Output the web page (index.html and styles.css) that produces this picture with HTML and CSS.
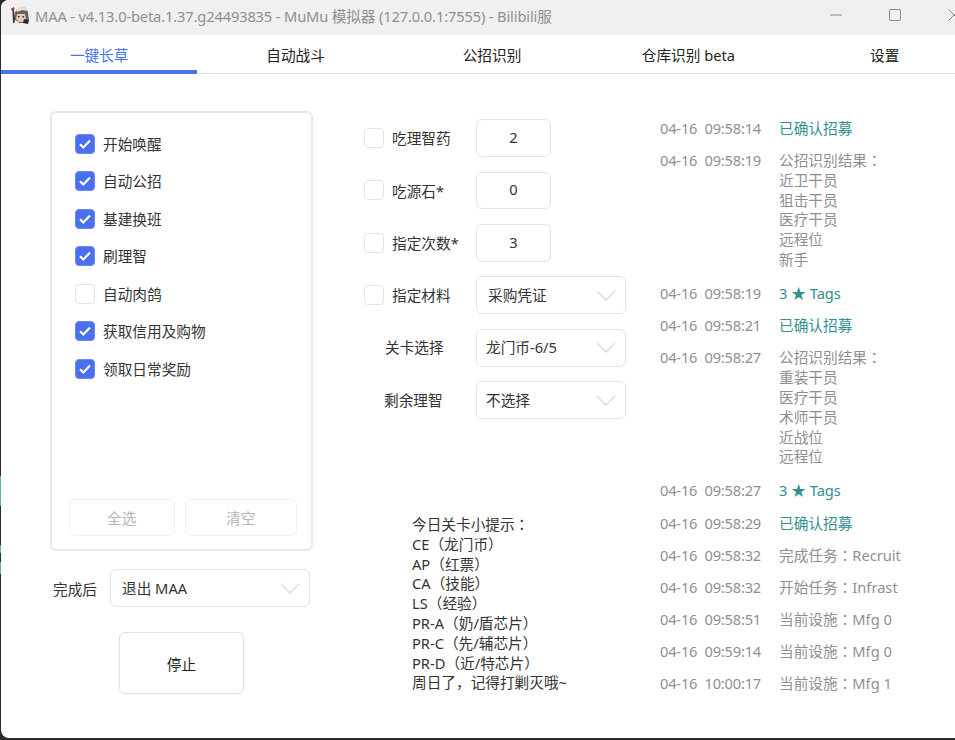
FILE: index.html
```html
<!DOCTYPE html>
<html lang="zh-CN">
<head>
<meta charset="utf-8">
<title>MAA</title>
<link rel="stylesheet" href="styles.css">
</head>
<body>
<div class="edge"><span class="teal t1"></span><span class="teal t2"></span><span class="teal t3"></span></div>
<div class="window">
  <header class="titlebar">
    <svg class="logo" width="20" height="20" viewBox="0 0 20 20">
      <path d="M5 8c1-4 4-6 7-6s6 2 6 6l1 7-3 3H6l-3-2z" fill="#6d6259"/>
      <path d="M6 4l4-3 6 2 2 3-6-1-5 2z" fill="#e8e4dc"/>
      <path d="M7 9h8l1 5-3 3H9l-3-3z" fill="#e3cbb8"/>
      <path d="M1 4l3-2 0 3 1 13H3L2.500 6z" fill="#3c2c25"/>
      <path d="M1.500 3l3 0-1 3z" fill="#c2372d"/>
      <path d="M8 11h1.500v1.500H8zM12.500 11H14v1.500h-1.500z" fill="#35291f"/>
      <path d="M14 14l5 1-1 4-5-1z" fill="#2f2723"/>
      <path d="M5 15l4 2-1 2H4z" fill="#f3efe8"/>
    </svg>
    <span class="title">MAA - v4.13.0-beta.1.37.g24493835 - MuMu 模拟器 (127.0.0.1:7555) - Bilibili服</span>
    <div class="controls">
      <svg class="ctl-min" width="13" height="2" viewBox="0 0 13 2"><path d="M0 1h12" stroke="#8a8a8a" stroke-width="1"/></svg>
      <svg class="ctl-max" width="12" height="12" viewBox="0 0 12 12"><rect x=".5" y=".5" width="11" height="11" rx="1.500" fill="none" stroke="#8a8a8a"/></svg>
      <svg class="ctl-close" width="9" height="12" viewBox="0 0 9 12"><path d="M.5.500l11 11M.5 11.500l11-11" stroke="#8a8a8a" fill="none"/></svg>
    </div>
  </header>
  <nav class="tabs">
    <div class="tab active">一键长草</div>
    <div class="tab">自动战斗</div>
    <div class="tab">公招识别</div>
    <div class="tab">仓库识别 beta</div>
    <div class="tab">设置</div>
  </nav>
  <main class="content">
    <section class="left">
      <div class="panel">
        <div class="checks">
          <label class="check"><span class="box on"><svg width="14" height="12" viewBox="0 0 14 12"><path d="M2 6.200l3.300 3.300L12 2.500" fill="none" stroke="#fff" stroke-width="2.200"/></svg></span>开始唤醒</label>
          <label class="check"><span class="box on"><svg width="14" height="12" viewBox="0 0 14 12"><path d="M2 6.200l3.300 3.300L12 2.500" fill="none" stroke="#fff" stroke-width="2.200"/></svg></span>自动公招</label>
          <label class="check"><span class="box on"><svg width="14" height="12" viewBox="0 0 14 12"><path d="M2 6.200l3.300 3.300L12 2.500" fill="none" stroke="#fff" stroke-width="2.200"/></svg></span>基建换班</label>
          <label class="check"><span class="box on"><svg width="14" height="12" viewBox="0 0 14 12"><path d="M2 6.200l3.300 3.300L12 2.500" fill="none" stroke="#fff" stroke-width="2.200"/></svg></span>刷理智</label>
          <label class="check"><span class="box"></span>自动肉鸽</label>
          <label class="check"><span class="box on"><svg width="14" height="12" viewBox="0 0 14 12"><path d="M2 6.200l3.300 3.300L12 2.500" fill="none" stroke="#fff" stroke-width="2.200"/></svg></span>获取信用及购物</label>
          <label class="check"><span class="box on"><svg width="14" height="12" viewBox="0 0 14 12"><path d="M2 6.200l3.300 3.300L12 2.500" fill="none" stroke="#fff" stroke-width="2.200"/></svg></span>领取日常奖励</label>
        </div>
        <div class="panel-btns">
          <button class="btn-dis b-all">全选</button>
          <button class="btn-dis b-clear">清空</button>
        </div>
      </div>
      <div class="after">
        <span>完成后</span>
        <div class="select sel-after">退出 MAA<svg class="chev" width="20" height="12" viewBox="0 0 20 12"><path d="M1 1l9 9 9-9" fill="none" stroke="#d9d9d9" stroke-width="1.300"/></svg></div>
      </div>
      <button class="stop">停止</button>
    </section>
    <section class="middle">
      <div class="form">
        <div class="row"><span class="box"></span><span class="lbl">吃理智药</span><div class="num">2</div></div>
        <div class="row"><span class="box"></span><span class="lbl">吃源石*</span><div class="num">0</div></div>
        <div class="row"><span class="box"></span><span class="lbl">指定次数*</span><div class="num">3</div></div>
        <div class="row"><span class="box"></span><span class="lbl up">指定材料</span><div class="select sel-a">采购凭证<svg class="chev" width="20" height="12" viewBox="0 0 20 12"><path d="M1 1l9 9 9-9" fill="none" stroke="#d9d9d9" stroke-width="1.300"/></svg></div></div>
        <div class="row"><span class="lbl2 up">关卡选择</span><div class="select">龙门币-6/5<svg class="chev" width="20" height="12" viewBox="0 0 20 12"><path d="M1 1l9 9 9-9" fill="none" stroke="#d9d9d9" stroke-width="1.300"/></svg></div></div>
        <div class="row"><span class="lbl2 l3 up">剩余理智</span><div class="select">不选择<svg class="chev" width="20" height="12" viewBox="0 0 20 12"><path d="M1 1l9 9 9-9" fill="none" stroke="#d9d9d9" stroke-width="1.300"/></svg></div></div>
      </div>
      <div class="tips">今日关卡小提示<span class="colon" lang="zh-TW">：</span><br>CE（龙门币）<br>AP（红票）<br>CA（技能）<br>LS（经验）<br>PR-A（奶/盾芯片）<br>PR-C（先/辅芯片）<br>PR-D（近/特芯片）<br>周日了，记得打剿灭哦~</div>
    </section>
    <section class="log">
      <div class="entry"><span class="time">04-16&nbsp;&nbsp;09:58:14</span><span class="msg teal-text">已确认招募</span></div>
      <div class="entry multi"><span class="time">04-16&nbsp;&nbsp;09:58:19</span><span class="msg">公招识别结果<span class="colon" lang="zh-TW">：</span><br>近卫干员<br>狙击干员<br>医疗干员<br>远程位<br>新手</span></div>
      <div class="entry"><span class="time">04-16&nbsp;&nbsp;09:58:19</span><span class="msg teal-text">3 ★ Tags</span></div>
      <div class="entry"><span class="time">04-16&nbsp;&nbsp;09:58:21</span><span class="msg teal-text">已确认招募</span></div>
      <div class="entry multi"><span class="time">04-16&nbsp;&nbsp;09:58:27</span><span class="msg">公招识别结果<span class="colon" lang="zh-TW">：</span><br>重装干员<br>医疗干员<br>术师干员<br>近战位<br>远程位</span></div>
      <div class="entry"><span class="time">04-16&nbsp;&nbsp;09:58:27</span><span class="msg teal-text">3 ★ Tags</span></div>
      <div class="entry"><span class="time">04-16&nbsp;&nbsp;09:58:29</span><span class="msg teal-text">已确认招募</span></div>
      <div class="entry"><span class="time">04-16&nbsp;&nbsp;09:58:32</span><span class="msg">完成任务<span class="colon" lang="zh-TW">：</span>Recruit</span></div>
      <div class="entry"><span class="time">04-16&nbsp;&nbsp;09:58:32</span><span class="msg">开始任务<span class="colon" lang="zh-TW">：</span>Infrast</span></div>
      <div class="entry"><span class="time">04-16&nbsp;&nbsp;09:58:51</span><span class="msg">当前设施<span class="colon" lang="zh-TW">：</span>Mfg 0</span></div>
      <div class="entry"><span class="time">04-16&nbsp;&nbsp;09:59:14</span><span class="msg">当前设施<span class="colon" lang="zh-TW">：</span>Mfg 0</span></div>
      <div class="entry"><span class="time">04-16&nbsp;&nbsp;10:00:17</span><span class="msg">当前设施<span class="colon" lang="zh-TW">：</span>Mfg 1</span></div>
    </section>
  </main>
</div>
</body>
</html>
```

FILE: styles.css
```css
* { box-sizing: border-box; }
html, body { margin: 0; height: 100%; }
body {
  width: 955px;
  height: 740px;
  overflow: hidden;
  background: #2b2b2b;
  font-family: "Noto Sans", "Noto Sans CJK SC", sans-serif;
  font-size: 14.67px;
  color: #333;
  display: flex;
}
.edge { width: 1px; height: 738px; flex: none; position: relative; }
.teal { position: absolute; left: 0; width: 1px; background: #57b5b0; }
.t1 { top: 476px; height: 30px; }
.t2 { top: 545px; height: 8px; }
.t3 { top: 562px; height: 12px; }
.window {
  width: 954px;
  height: 738px;
  background: #fff;
  border-radius: 8px 0 0 8px;
  overflow: hidden;
  display: flex;
  flex-direction: column;
}
.titlebar {
  height: 35px;
  flex: none;
  background: #f0f0f0;
  display: flex;
  align-items: center;
  padding: 0 0 5px 9px;
}
.logo { flex: none; margin-right: 5px; }
.title { color: #8f8f8f; white-space: nowrap; flex: 1; letter-spacing: -0.14px; }
.controls { display: flex; align-items: center; width: 125px; flex: none; }
.ctl-min { flex: none; }
.ctl-max { flex: none; margin-left: 46px; }
.ctl-close { flex: none; margin-left: 47px; overflow: hidden; }
.tabs {
  height: 39px;
  flex: none;
  display: flex;
  border-bottom: 1px solid #e0e0e0;
}
.tab {
  width: 196.4px;
  flex: none;
  text-align: center;
  line-height: 40px;
  color: #222;
  height: 39px;
  white-space: nowrap;
}
.active { color: #4a72f0; border-bottom: 4px solid #4a72f0; }
.content { flex: 1; display: flex; min-height: 0; }
.left { width: 363px; flex: none; padding: 37px 0 0 49px; display: flex; flex-direction: column; }
.panel {
  width: 263px;
  height: 440px;
  border: 2px solid #e8e8e8;
  border-radius: 6px;
  padding: 20.500px 14px 13px 23px;
  display: flex;
  flex-direction: column;
  justify-content: space-between;
}
.checks { display: flex; flex-direction: column; gap: 17.500px; }
.check { display: flex; align-items: center; height: 20px; line-height: 20px; }
.box {
  width: 20px;
  height: 20px;
  flex: none;
  border: 1px solid #e3e3e3;
  border-radius: 4px;
  margin-right: 8px;
  background: #fff;
  display: flex;
  align-items: center;
  justify-content: center;
}
.box.on { background: #4a6ff0; border-color: #6c8af3; }
.panel-btns { display: flex; gap: 10px; margin-left: -6px; }
.btn-dis {
  height: 37px;
  border: 1px solid #efefef;
  border-radius: 6px;
  background: #fff;
  color: #b5b5b5;
  font: inherit;
  padding: 0;
}
.b-all { width: 106px; }
.b-clear { width: 113px; }
.after { display: flex; align-items: center; margin-top: 18px; padding-left: 3px; gap: 13px; }
.select {
  width: 150px;
  height: 38px;
  border: 1px solid #e3e3e3;
  border-radius: 6px;
  padding: 0 9px 2px 9px;
  display: flex;
  align-items: center;
  justify-content: space-between;
  background: #fff;
}
.sel-after { width: 200px; padding-left: 11px; }
.sel-a { padding-left: 11px; }
.chev { flex: none; margin-top: 3px; }
.stop {
  width: 125px;
  height: 62px;
  margin: 25px 0 0 69px;
  border: 1px solid #e0e0e0;
  border-radius: 6px;
  background: #fff;
  color: #222;
  font: inherit;
  padding: 0;
}
.middle { width: 296px; flex: none; padding-top: 45px; display: flex; flex-direction: column; }
.form { display: flex; flex-direction: column; gap: 15px; }
.row { display: flex; align-items: center; height: 37.500px; }
.lbl { width: 84px; flex: none; white-space: nowrap; }
.lbl2 { width: 112px; flex: none; padding-left: 21px; }
.l3 { padding-left: 20px; }
.up { margin-bottom: 2px; }
.num {
  width: 75px;
  height: 37.500px;
  border: 1px solid #e3e3e3;
  border-radius: 6px;
  padding-bottom: 2px;
  display: flex;
  align-items: center;
  justify-content: center;
}
.tips { margin: 96px 0 0 48px; line-height: 19.800px; white-space: nowrap; }
.colon { font-family: "Noto Sans CJK TC", sans-serif; line-height: 0; }
.log { flex: 1; padding: 45px 0 0 0; display: flex; flex-direction: column; gap: 12.300px; min-width: 0; }
.entry { display: flex; line-height: 19.800px; color: #8f8f8f; white-space: nowrap; }
.multi { margin-bottom: 2px; }
.time { width: 119px; flex: none; letter-spacing: -0.2px; }
.teal-text { color: #2f8f92; }
```
